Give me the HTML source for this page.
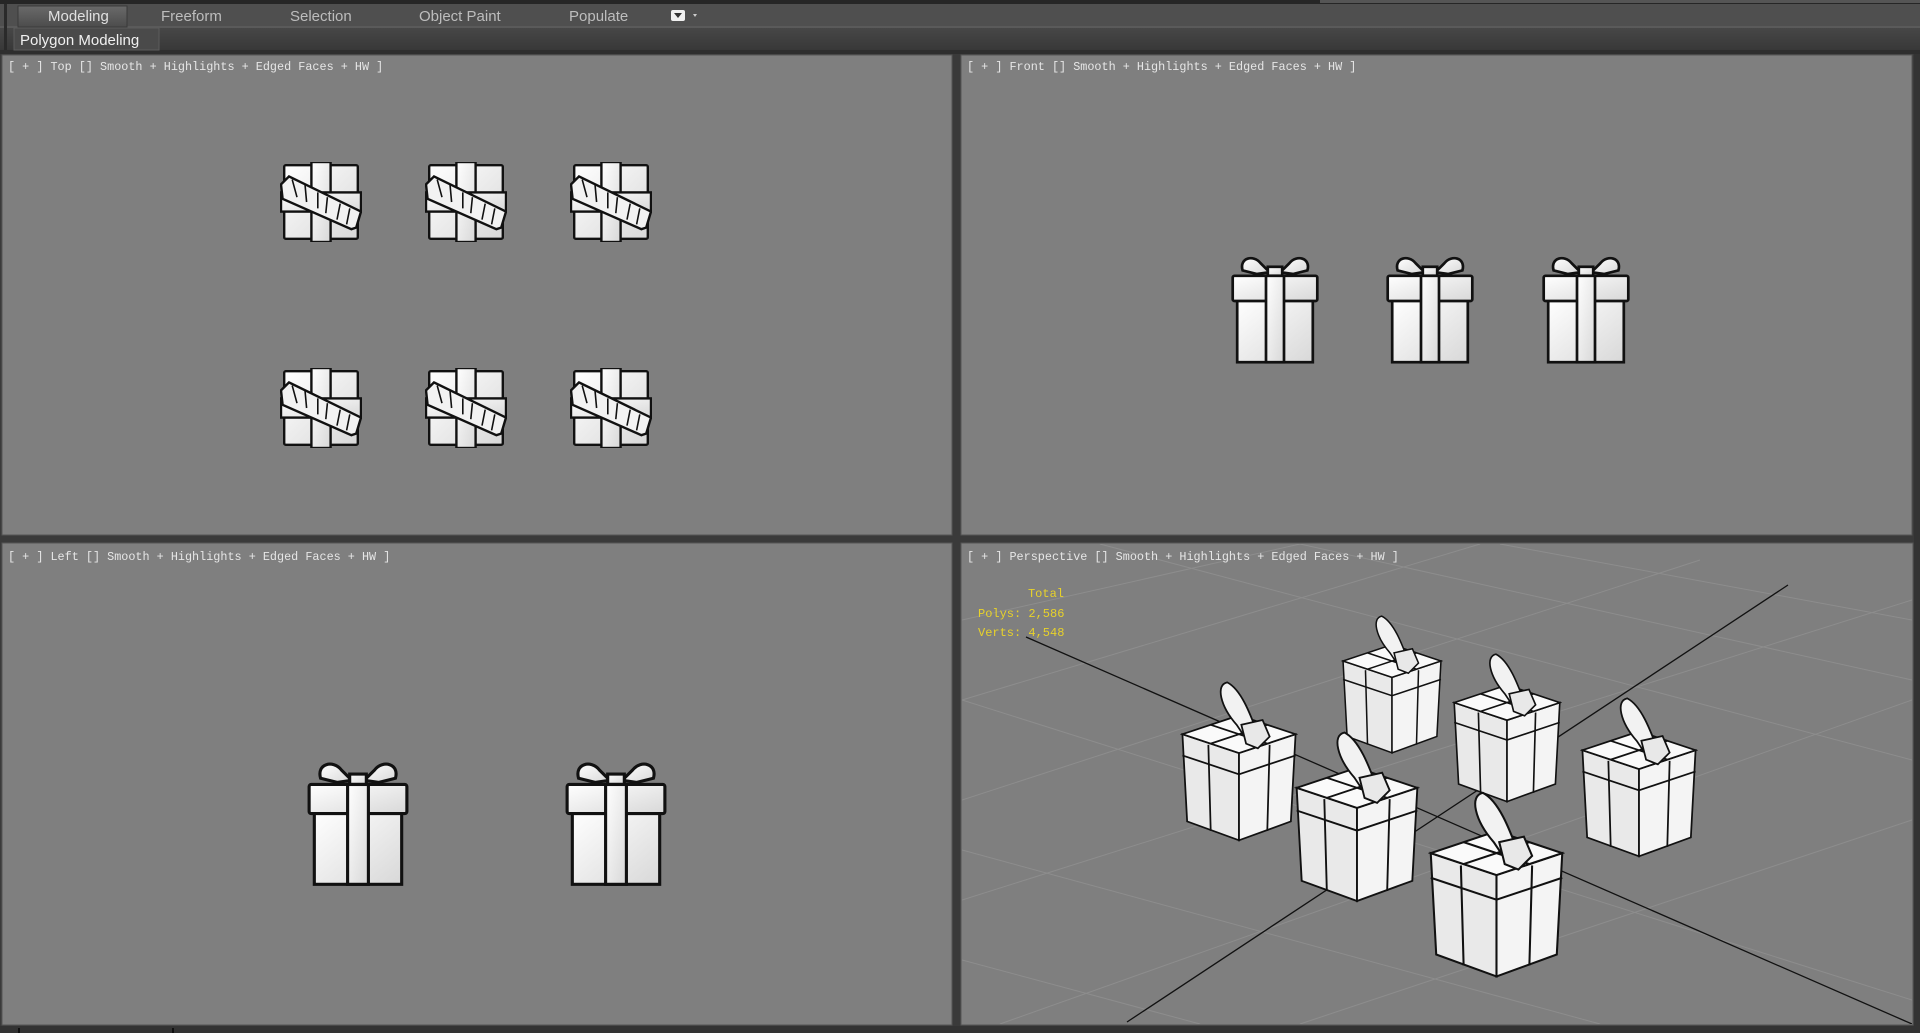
<!DOCTYPE html>
<html><head><meta charset="utf-8"><style>
html,body{margin:0;padding:0;background:#3a3a3a;width:1920px;height:1033px;overflow:hidden}
svg{display:block}
.lbl{font-family:"Liberation Mono",monospace;font-size:11.8px;fill:#e6e6e6}
.tab{font-family:"Liberation Sans",sans-serif;font-size:15px;fill:#bdbdbd}
.st{font-family:"Liberation Mono",monospace;font-size:12px;fill:#e8d22a}
</style></head><body>
<svg width="1920" height="1033" viewBox="0 0 1920 1033" xmlns="http://www.w3.org/2000/svg">
<defs>
<linearGradient id="wg" x1="0" y1="0" x2="1" y2="1"><stop offset="0" stop-color="#fff"/><stop offset="1" stop-color="#d8d8d8"/></linearGradient>
<linearGradient id="tb" x1="0" y1="0" x2="0" y2="1"><stop offset="0" stop-color="#6a6a6a"/><stop offset="1" stop-color="#4c4c4c"/></linearGradient>
<linearGradient id="r2" x1="0" y1="0" x2="0" y2="1"><stop offset="0" stop-color="#474747"/><stop offset="1" stop-color="#383838"/></linearGradient>
<symbol id="fg" viewBox="0 0 100 120">
<g stroke="#111" stroke-width="3" fill="url(#wg)">
<path d="M14 16 C10 2 26 -2 34 8 L44 18 L30 20 Z"/><path d="M86 16 C90 2 74 -2 66 8 L56 18 L70 20 Z"/>
<rect x="42" y="12" width="16" height="10"/>
<rect x="8" y="48" width="84" height="70"/>
<rect x="3" y="22" width="94" height="28" rx="2"/>
<rect x="40" y="22" width="20" height="96"/>
</g></symbol>
<symbol id="tg" viewBox="0 0 100 100">
<g stroke="#111" stroke-width="3" fill="url(#wg)">
<rect x="4" y="4" width="92" height="92" rx="2"/>
<rect x="38" y="0" width="24" height="100"/>
<rect x="0" y="38" width="100" height="24"/>
<path d="M0 28 L10 18 L100 62 L94 82 L88 84 L2 46 Z" fill="#f2f2f2"/>
<path d="M14 22 L20 44 M30 28 L32 50 M46 38 L46 58 M58 44 L56 64 M74 52 L70 72 M86 58 L82 78" stroke-width="2"/>
</g></symbol>
<symbol id="pg" viewBox="0 -30 100 140">
<g stroke="#111" stroke-width="1.5">
<path d="M2 16 L50 32 L50 106 L6 90 Z" fill="#e9e9e9"/>
<path d="M50 32 L98 16 L94 90 L50 106 Z" fill="#f4f4f4"/>
<path d="M50 0 L98 16 L50 32 L2 16 Z" fill="#fafafa"/>
<path d="M2 34 L50 50 L98 34 M24 25 L26 98 M76 25 L74 98 M26 8 L74 24 M74 8 L26 24" fill="none"/>
<path d="M40 -28 C30 -26 34 -8 48 8 L56 20 L66 16 C60 0 52 -22 40 -28 Z" fill="#f2f2f2"/>
<path d="M52 8 L70 4 L76 18 L66 28 L56 24 Z" fill="#e8e8e8"/>
</g></symbol>
</defs>
<rect x="0" y="0" width="1920" height="4" fill="#262626"/>
<rect x="0" y="4" width="1920" height="22" fill="#4f4f4f"/>
<rect x="1320" y="0" width="600" height="3" fill="#555"/>
<rect x="0" y="26" width="1920" height="2" fill="#5a5a5a"/>
<rect x="0" y="28" width="1920" height="22" fill="url(#r2)"/>
<rect x="0" y="50" width="1920" height="4" fill="#2e2e2e"/>
<rect x="4" y="4" width="3" height="46" fill="#2a2a2a"/>
<rect x="18" y="6" width="109" height="21" fill="url(#tb)" stroke="#3a3a3a"/>
<text class="tab" x="48" y="21" style="fill:#e0e0e0">Modeling</text>
<text class="tab" x="161" y="21">Freeform</text>
<text class="tab" x="290" y="21">Selection</text>
<text class="tab" x="419" y="21">Object Paint</text>
<text class="tab" x="569" y="21">Populate</text>
<rect x="671" y="10" width="14" height="11" rx="2" fill="#f0f0f0"/><path d="M674 13 L682 13 L678 18 Z" fill="#333"/><path d="M693 14 L697 14 L695 17 Z" fill="#ccc"/>
<rect x="14" y="28" width="145" height="22" fill="#4a4a4a" stroke="#5c5c5c"/>
<text class="tab" x="20" y="45" style="fill:#f0f0f0">Polygon Modeling</text>
<rect x="0" y="54" width="1920" height="979" fill="#3a3a3a"/>
<rect x="1914" y="54" width="6" height="979" fill="#333"/>
<rect x="2" y="55" width="950" height="480" fill="#7f7f7f" stroke="#555"/>
<rect x="961" y="55" width="951" height="480" fill="#7f7f7f" stroke="#555"/>
<rect x="2" y="543" width="950" height="482" fill="#7f7f7f" stroke="#555"/>
<rect x="961" y="543" width="952" height="482" fill="#7f7f7f" stroke="#555"/>
<text class="lbl" x="8" y="70">[ + ] Top [] Smooth + Highlights + Edged Faces + HW ]</text>
<text class="lbl" x="967" y="70">[ + ] Front [] Smooth + Highlights + Edged Faces + HW ]</text>
<text class="lbl" x="8" y="560">[ + ] Left [] Smooth + Highlights + Edged Faces + HW ]</text>
<use href="#tg" x="280" y="162" width="82" height="80"/>
<use href="#tg" x="425" y="162" width="82" height="80"/>
<use href="#tg" x="570" y="162" width="82" height="80"/>
<use href="#tg" x="280" y="368" width="82" height="80"/>
<use href="#tg" x="425" y="368" width="82" height="80"/>
<use href="#tg" x="570" y="368" width="82" height="80"/>
<use href="#fg" x="1230" y="256" width="90" height="108"/>
<use href="#fg" x="1385" y="256" width="90" height="108"/>
<use href="#fg" x="1541" y="256" width="90" height="108"/>
<use href="#fg" x="306" y="760" width="104" height="128"/>
<use href="#fg" x="564" y="760" width="104" height="128"/>
<svg x="962" y="544" width="950" height="480" viewBox="962 544 950 480">
<g stroke="#8d8d8d" stroke-width="1" fill="none">
<path d="M962 620 L1300 544 M962 700 L1480 544 M962 800 L1700 560 M1000 1024 L1912 700 M1300 1024 L1912 820 M962 900 L1912 600"/>
<path d="M1100 544 L1912 760 M1300 544 L1912 680 M962 700 L1912 1000 M962 850 L1600 1024 M962 960 L1200 1024 M1500 544 L1912 620"/>
</g>
<path d="M1026 637 L1912 1024 M1788 585 L1127 1022" stroke="#111" stroke-width="1.3"/>
<text class="lbl" x="967" y="560">[ + ] Perspective [] Smooth + Highlights + Edged Faces + HW ]</text>
<text class="st" x="1064" y="597" text-anchor="end">Total</text>
<text class="st" x="978" y="617">Polys: 2,586</text>
<text class="st" x="978" y="636">Verts: 4,548</text>
<use href="#pg" x="1341" y="614" width="102" height="143"/>
<use href="#pg" x="1452" y="652" width="110" height="154"/>
<use href="#pg" x="1180" y="680" width="118" height="165"/>
<use href="#pg" x="1580" y="696" width="118" height="165"/>
<use href="#pg" x="1294" y="730" width="126" height="176"/>
<use href="#pg" x="1428" y="790" width="137" height="192"/>
</svg>
<rect x="0" y="1026" width="1920" height="7" fill="#333"/>
<rect x="18" y="1028" width="2" height="5" fill="#111"/><rect x="172" y="1028" width="2" height="5" fill="#111"/>
</svg>
</body></html>
